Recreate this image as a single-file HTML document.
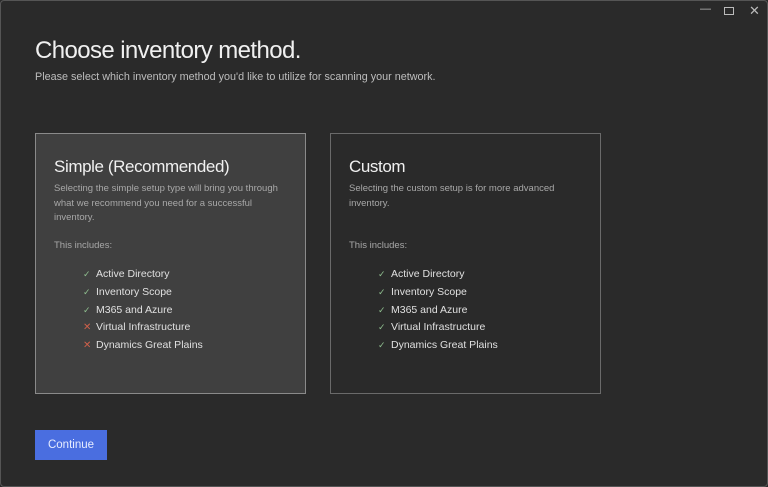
<!DOCTYPE html>
<html><head><style>
*{margin:0;padding:0;box-sizing:border-box}
body{width:768px;height:487px;background:#2a2a2a;font-family:"Liberation Sans",sans-serif;color:#e8e8e8;position:relative;overflow:hidden}
.win{position:absolute;left:0;top:0;width:768px;height:487px;border:1px solid #555;border-radius:4px}
h1{position:absolute;left:35px;top:37px;font-size:24px;font-weight:normal;color:#f0f0f0;letter-spacing:-0.6px}
.sub{position:absolute;left:35px;top:71px;font-size:10.8px;color:#bdbdbd}
.card{position:absolute;top:133px;width:271px;height:261px;border:1px solid #6a6a6a}
.c1{left:35px;background:#404040;border-color:#8a8a8a}
.c2{left:330px;background:#2a2a2a}
.card h2{position:absolute;left:18px;top:23px;font-size:17px;font-weight:normal;color:#f0f0f0;letter-spacing:-0.4px}
.card .d{position:absolute;left:18px;top:48px;width:240px;font-size:9.5px;line-height:14.5px;color:#a8a8a8}
.card .inc{position:absolute;left:18px;top:106px;font-size:9.5px;color:#a8a8a8}
.card ul{position:absolute;left:47px;top:132px;list-style:none;font-size:10.5px;line-height:17.8px;color:#e0e0e0}
.ok{color:#8fbf8f;font-size:9px;display:inline-block;width:13px}
.no{color:#d0604a;font-size:10px;display:inline-block;width:13px}
.btn{position:absolute;left:35px;top:430px;width:72px;height:30px;background:#4a6ee0;color:#e6ecff;font-size:11.5px;text-align:center;line-height:30px}
.ctl{position:absolute;top:4px;font-size:11px;color:#bbb}
</style></head><body>
<div class="win"></div>
<div class="ctl" style="left:700px;top:3px">&#8212;</div>
<div style="position:absolute;left:724px;top:7px;width:10px;height:8px;border:1.5px solid #bbb"></div>
<div class="ctl" style="left:749px;top:3px;font-size:13px">&#10005;</div>
<h1>Choose inventory method.</h1>
<div class="sub">Please select which inventory method you'd like to utilize for scanning your network.</div>
<div class="card c1">
<h2>Simple (Recommended)</h2>
<div class="d">Selecting the simple setup type will bring you through what we recommend you need for a successful inventory.</div>
<div class="inc">This includes:</div>
<ul>
<li><span class="ok">&#10003;</span>Active Directory</li>
<li><span class="ok">&#10003;</span>Inventory Scope</li>
<li><span class="ok">&#10003;</span>M365 and Azure</li>
<li><span class="no">&#10005;</span>Virtual Infrastructure</li>
<li><span class="no">&#10005;</span>Dynamics Great Plains</li>
</ul></div>
<div class="card c2">
<h2>Custom</h2>
<div class="d">Selecting the custom setup is for more advanced inventory.</div>
<div class="inc">This includes:</div>
<ul>
<li><span class="ok">&#10003;</span>Active Directory</li>
<li><span class="ok">&#10003;</span>Inventory Scope</li>
<li><span class="ok">&#10003;</span>M365 and Azure</li>
<li><span class="ok">&#10003;</span>Virtual Infrastructure</li>
<li><span class="ok">&#10003;</span>Dynamics Great Plains</li>
</ul></div>
<div class="btn">Continue</div>
</body></html>
